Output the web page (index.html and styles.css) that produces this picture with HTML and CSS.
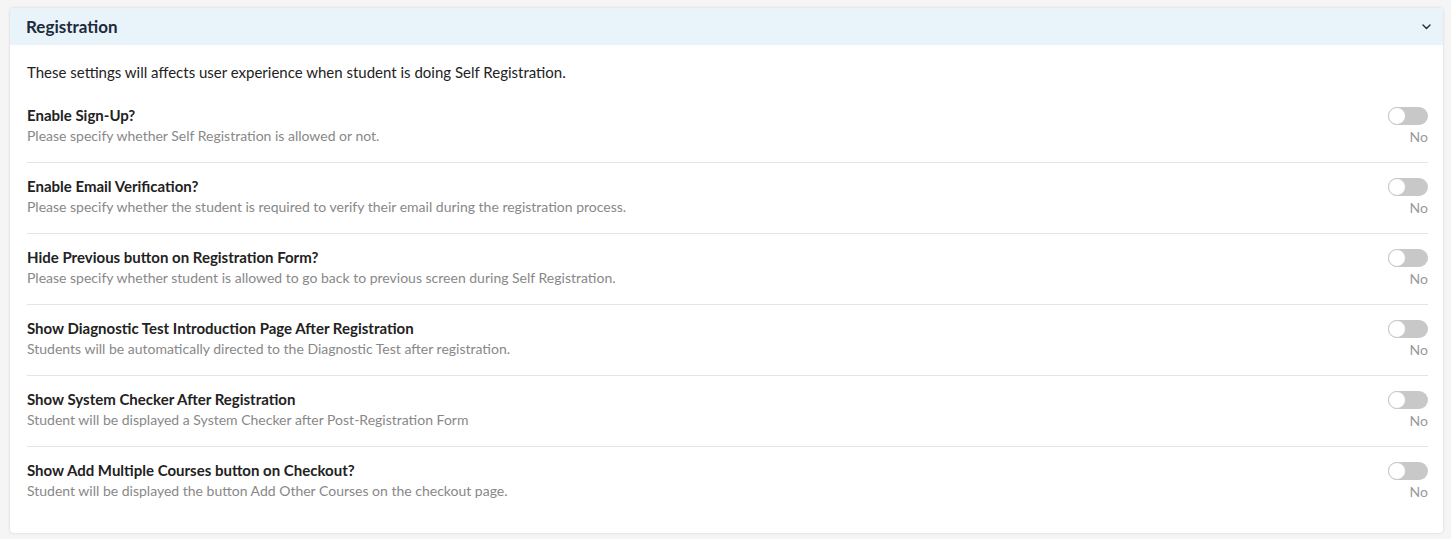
FILE: index.html
```html
<!DOCTYPE html>
<html>
<head>
<meta charset="utf-8">
<link rel="stylesheet" href="styles.css">
</head>
<body>
<section class="card">
  <header class="card-header">
    <h2 class="card-title">Registration</h2>
    <svg class="chevron" width="9" height="6" viewBox="0 0 9 6"><path d="M1 1l3.5 3.5L8 1" fill="none" stroke="#1c2b3c" stroke-width="1.4" stroke-linecap="round" stroke-linejoin="round"/></svg>
  </header>
  <div class="card-body">
    <p class="intro">These settings will affects user experience when student is doing Self Registration.</p>
    <div class="setting">
      <div class="setting-text">
        <div class="setting-title">Enable Sign-Up?</div>
        <div class="setting-desc">Please specify whether Self Registration is allowed or not.</div>
      </div>
      <div class="setting-control"><span class="toggle"><span class="knob"></span></span><span class="state">No</span></div>
    </div>
    <div class="setting">
      <div class="setting-text">
        <div class="setting-title">Enable Email Verification?</div>
        <div class="setting-desc">Please specify whether the student is required to verify their email during the registration process.</div>
      </div>
      <div class="setting-control"><span class="toggle"><span class="knob"></span></span><span class="state">No</span></div>
    </div>
    <div class="setting">
      <div class="setting-text">
        <div class="setting-title">Hide Previous button on Registration Form?</div>
        <div class="setting-desc">Please specify whether student is allowed to go back to previous screen during Self Registration.</div>
      </div>
      <div class="setting-control"><span class="toggle"><span class="knob"></span></span><span class="state">No</span></div>
    </div>
    <div class="setting">
      <div class="setting-text">
        <div class="setting-title">Show Diagnostic Test Introduction Page After Registration</div>
        <div class="setting-desc">Students will be automatically directed to the Diagnostic Test after registration.</div>
      </div>
      <div class="setting-control"><span class="toggle"><span class="knob"></span></span><span class="state">No</span></div>
    </div>
    <div class="setting">
      <div class="setting-text">
        <div class="setting-title">Show System Checker After Registration</div>
        <div class="setting-desc">Student will be displayed a System Checker after Post-Registration Form</div>
      </div>
      <div class="setting-control"><span class="toggle"><span class="knob"></span></span><span class="state">No</span></div>
    </div>
    <div class="setting">
      <div class="setting-text">
        <div class="setting-title">Show Add Multiple Courses button on Checkout?</div>
        <div class="setting-desc">Student will be displayed the button Add Other Courses on the checkout page.</div>
      </div>
      <div class="setting-control"><span class="toggle"><span class="knob"></span></span><span class="state">No</span></div>
    </div>
  </div>
</section>
</body>
</html>
```
FILE: styles.css
```css
html, body {
  margin: 0;
  background: #f5f5f5;
}
body {
  padding: 8px 8px 6px 10px;
  font-family: "Lato", "Noto Sans", sans-serif;
}
.card {
  background: #fff;
  border-radius: 4px;
  box-shadow: 0 0 3px rgba(0,0,0,0.15);
  overflow: hidden;
}
.card-header {
  height: 37px;
  background: #e8f3fa;
  display: flex;
  align-items: center;
  justify-content: space-between;
  padding: 0 12px 0 16px;
}
.card-title {
  margin: 0;
  font-size: 17px;
  font-weight: 700;
  color: #1c2b3c;
}
.chevron { margin-top: 1px; }
.card-body {
  padding: 18px 15px 32px 17px;
}
.intro {
  margin: 0 0 24px;
  font-size: 15px;
  line-height: 18px;
  color: #222;
}
.setting {
  display: flex;
  justify-content: space-between;
  align-items: flex-start;
  padding: 13px 0 16px;
  border-bottom: 1px solid #e4e4e4;
}
.setting:first-of-type { padding-top: 0; }
.setting:last-child { border-bottom: none; padding-bottom: 0; }
.setting-title {
  font-size: 15px;
  font-weight: 700;
  color: #222;
  line-height: 20px;
}
.setting-desc {
  font-size: 14px;
  color: #888;
  line-height: 20px;
  margin-top: 1px;
}
.setting-control {
  display: flex;
  flex-direction: column;
  align-items: flex-end;
  gap: 3px;
  padding-top: 2px;
}
.toggle {
  display: block;
  width: 40px;
  height: 18px;
  border-radius: 9px;
  background: #c8c8c8;
  position: relative;
}
.knob {
  position: absolute;
  left: 0;
  top: 0;
  width: 16px;
  height: 16px;
  border-radius: 50%;
  background: #fff;
  border: 1px solid #c8c8c8;
}
.state {
  font-size: 14px;
  color: #999;
  line-height: 18px;
}
```
